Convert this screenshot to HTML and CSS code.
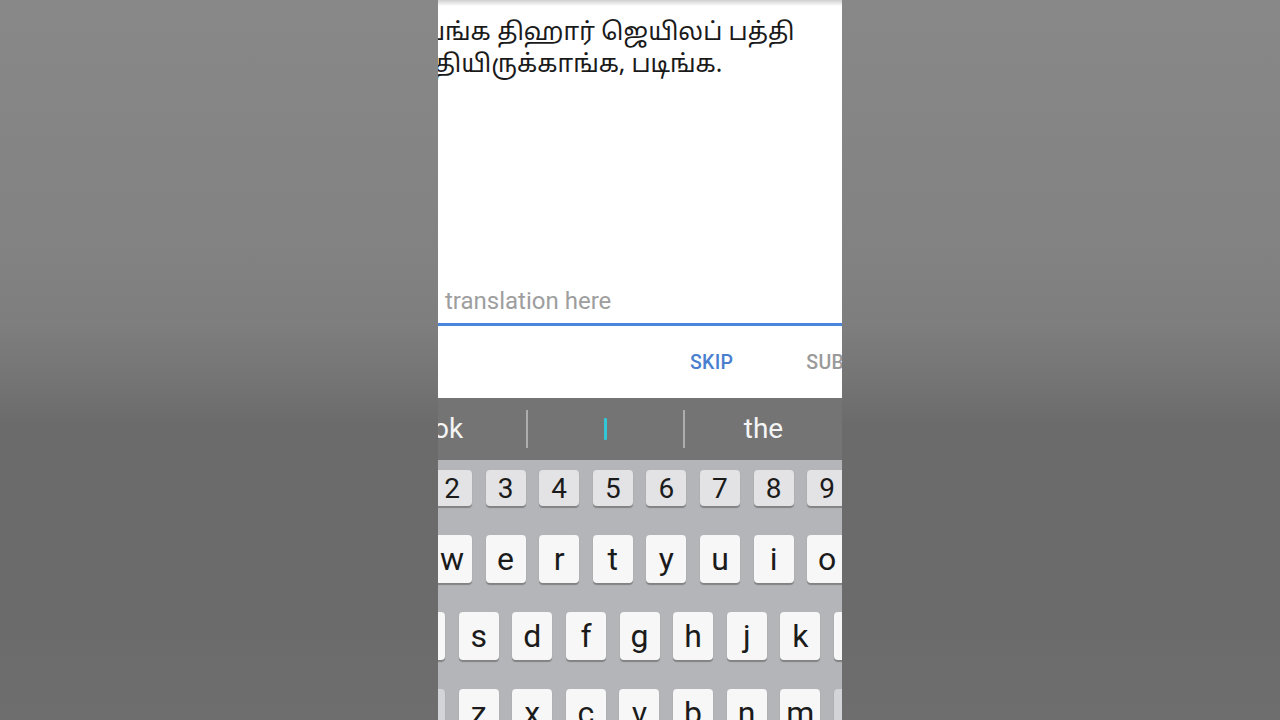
FILE: index.html
```html
<!DOCTYPE html>
<html lang="ta">
<head>
<meta charset="utf-8">
<title>Translate</title>
<link rel="stylesheet" href="styles.css">
</head>
<body>
<div class="phone">
  <section class="sheet">
    <div class="topshade"></div>
    <div class="source">
      <div class="line line-1">அவங்க திஹார் ஜெயிலப் பத்தி</div>
      <div class="line line-2">எழுதியிருக்காங்க, படிங்க.</div>
    </div>
    <div class="field">
      <div class="placeholder">translation here</div>
    </div>
    <div class="actions">
      <span class="btn skip">SKIP</span>
      <span class="btn submit">SUBMIT</span>
    </div>
  </section>
  <div class="suggest">
    <div class="sg sg-left">ok</div>
    <div class="divider"></div>
    <div class="sg sg-mid"><span class="cursor"></span></div>
    <div class="divider"></div>
    <div class="sg sg-right">the</div>
  </div>
  <div class="keyboard">
    <div class="row row-num">
      <span class="key num">1</span><span class="key num">2</span><span class="key num">3</span><span class="key num">4</span><span class="key num">5</span><span class="key num">6</span><span class="key num">7</span><span class="key num">8</span><span class="key num">9</span><span class="key num">0</span>
    </div>
    <div class="row row-q">
      <span class="key">q</span><span class="key">w</span><span class="key">e</span><span class="key">r</span><span class="key">t</span><span class="key">y</span><span class="key">u</span><span class="key">i</span><span class="key">o</span><span class="key">p</span>
    </div>
    <div class="row row-a">
      <span class="key">a</span><span class="key">s</span><span class="key">d</span><span class="key">f</span><span class="key">g</span><span class="key">h</span><span class="key">j</span><span class="key">k</span><span class="key">l</span>
    </div>
    <div class="row row-z">
      <span class="key func shift"></span><span class="key">z</span><span class="key">x</span><span class="key">c</span><span class="key">v</span><span class="key">b</span><span class="key">n</span><span class="key">m</span><span class="key func back"></span>
    </div>
  </div>
</div>
</body>
</html>
```
FILE: styles.css
```css
* { box-sizing: border-box; }
html, body { margin: 0; padding: 0; }
body {
  width: 1280px;
  height: 720px;
  overflow: hidden;
  background: linear-gradient(to bottom, #888888 0%, #828283 35%, #7e7e7f 45%, #747474 53%, #6b6b6b 59%, #6b6b6b 85%, #6e6e6e 100%);
  font-family: Roboto, "Noto Sans", sans-serif;
}
.phone {
  width: 404px;
  height: 720px;
  margin: 0 auto;
  overflow: hidden;
  display: flex;
  flex-direction: column;
  background: #ffffff;
}
.sheet {
  height: 398px;
  background: #ffffff;
  display: flex;
  flex-direction: column;
  flex: none;
}
.topshade {
  height: 6px;
  background: linear-gradient(to bottom, #cfcfcf, #ffffff);
  flex: none;
}
.source {
  height: 262px;
  padding-top: 12px;
  overflow: hidden;
  flex: none;
}
.line {
  white-space: nowrap;
  font-family: "Noto Sans Tamil", "Lohit Tamil", "Noto Sans", sans-serif;
  font-size: 24.5px;
  line-height: 32px;
  color: #1a1a1a;
}
.line-1 { margin-left: -46px; }
.line-2 { margin-left: -50px; }
.field {
  height: 58px;
  border-bottom: 3px solid #4a86dc;
  padding-left: 7px;
  padding-top: 19px;
  flex: none;
}
.placeholder {
  font-size: 24px;
  line-height: 28px;
  color: #9e9e9e;
  white-space: nowrap;
}
.actions {
  flex: 1;
  display: flex;
  align-items: center;
  padding-left: 252px;
  gap: 73px;
  white-space: nowrap;
}
.btn {
  font-size: 19.5px;
  font-weight: 500;
  letter-spacing: 0.3px;
}
.skip { color: #4a7fcf; }
.submit { color: #9a9a9a; }
.suggest {
  height: 62px;
  flex: none;
  background: #747474;
  display: flex;
  align-items: center;
}
.sg {
  color: #f4f4f4;
  font-size: 28px;
  display: flex;
  align-items: center;
  justify-content: center;
  height: 100%;
  padding-bottom: 2px;
}
.sg-left { width: 93px; justify-content: flex-start; margin-left: -5px; padding-left: 0; }
.sg-mid { width: 155px; }
.sg-right { flex: 1; }
.divider {
  width: 2px;
  height: 38px;
  background: #adadad;
  flex: none;
}
.cursor {
  width: 3px;
  height: 22px;
  background: #33c6d6;
  border-radius: 1px;
  margin-top: 2px;
}
.keyboard {
  flex: 1;
  background: #b4b5b8;
  padding-top: 10px;
  display: flex;
  flex-direction: column;
  gap: 29px;
}
.row {
  display: flex;
  gap: 13.6px;
  flex: none;
}
.row-num { margin-left: -59.6px; }
.row-q { margin-left: -59.6px; }
.row-a { margin-left: -32.8px; }
.row-z { margin-left: -59.6px; }
.key {
  width: 40px;
  height: 48px;
  flex: none;
  background: #f7f7f7;
  border-radius: 4px;
  box-shadow: 0 1.5px 1px rgba(0, 0, 0, 0.28);
  display: flex;
  align-items: center;
  justify-content: center;
  font-size: 32px;
  color: #1b1b1b;
}
.key.num {
  height: 36px;
  background: #e3e3e5;
  font-size: 28px;
}
.key.func { background: #d3d4d7; }
.key.shift { width: 66.6px; }
.key.back { width: 66.6px; }
```
